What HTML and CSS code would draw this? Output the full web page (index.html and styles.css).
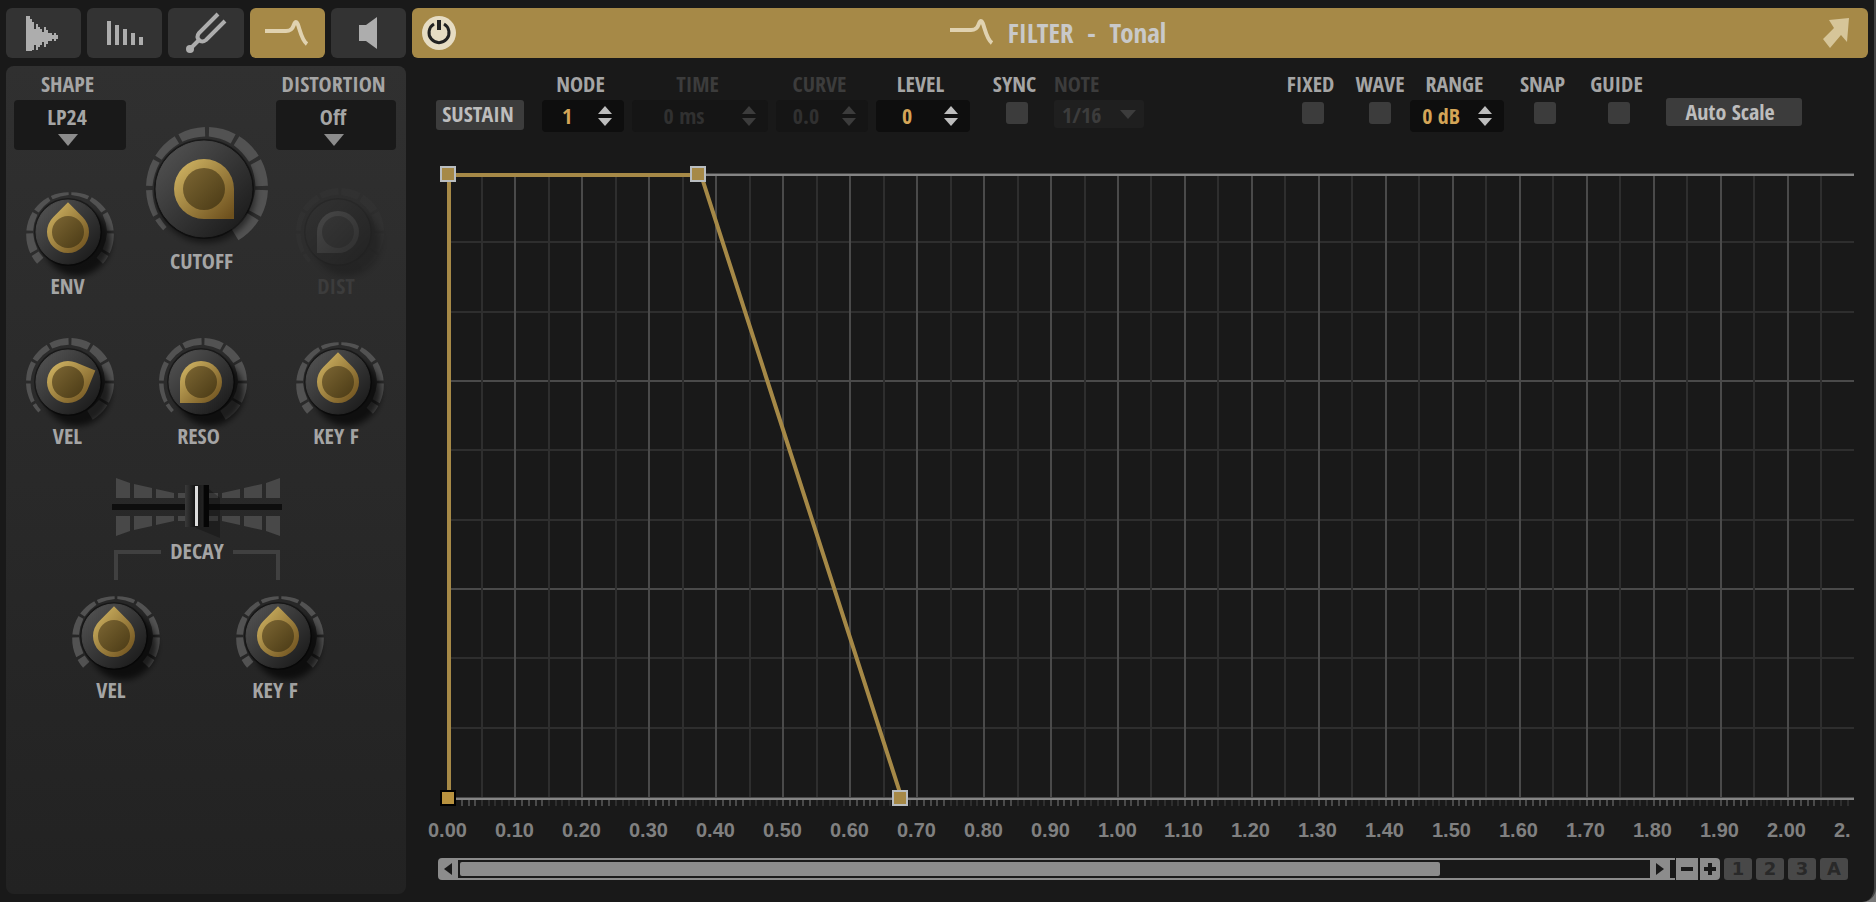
FILE: index.html
```html
<!DOCTYPE html>
<html lang="en">
<head>
    <meta charset="UTF-8">
    <meta name="viewport" content="width=device-width, initial-scale=1.0">
    <title>Filter - Tonal</title>
    <link rel="stylesheet" href="styles.css">
</head>
<body>
    <div class="window">
        <nav class="tabs">
            <button class="tab" aria-label="Sample">
                <svg width="38" height="36" viewBox="0 0 38 36"><path d="M1 1h4v3h2v3h2v7h2v-5h2v3h2v2h2v3h2v-5h2v3h2v3h4v2h2v-2h2v2h2v4h-2v2h-2v-2h-2v2h-4v3h-2v3h-2v-5h-2v3h-2v2h-2v3h-2v-5H9v5H7v3H5v4H1z"/></svg>
            </button>
            <button class="tab" aria-label="Harmonics">
                <svg width="38" height="26" viewBox="0 0 38 26"><path d="M1 1h4v24H1zM9 5h4v20H9zM17 9h4v16h-4zM25 13h4v12h-4zM33 17h4v8h-4z"/></svg>
            </button>
            <button class="tab" aria-label="Tuning">
                <svg width="42" height="42" viewBox="0 0 42 42"><path class="line" d="M33 2 14 21Q11 25 14 28Q17 31 21 28L40 9M14 28 6 36"/><circle cx="5" cy="37" r="4"/></svg>
            </button>
            <button class="tab active" aria-label="Filter">
                <svg width="44" height="28" viewBox="0 0 44 28"><path class="curve" d="M0 12H21C30 12 28 3 31 3C34 3 35 20 42 25"/></svg>
            </button>
            <button class="tab" aria-label="Amplifier">
                <svg width="20" height="34" viewBox="0 0 20 34"><path d="M1 9h7L19 1v32L8 25H1z"/></svg>
            </button>
        </nav>

        <header class="header">
            <button class="power" aria-label="Power">
                <svg width="34" height="34" viewBox="0 0 34 34"><circle class="disc" cx="17" cy="17" r="17"/><path class="ring" d="M12 8A10 10 0 1 0 22 8"/><path class="bar" d="M17 4v10"/></svg>
            </button>
            <div class="title">
                <svg width="44" height="34" viewBox="0 0 44 34"><path class="curve" d="M0 14H21C30 14 28 5 31 5C34 5 35 22 42 27"/></svg>
                <h1>FILTER&nbsp; -&nbsp; Tonal</h1>
            </div>
            <button class="expand" aria-label="Expand">
                <svg width="28" height="32" viewBox="0 0 28 32"><path d="M7 3 27 1 25 25 19 18 8 31 1 22 12 11z"/></svg>
            </button>
        </header>

        <aside class="sidebar">
            <div class="knob-grid">
                <div class="column left">
                    <label class="caption" for="shape">SHAPE</label>
                    <div class="select tall">
                        <select id="shape"><option>LP24</option></select>
                        <svg width="20" height="12" viewBox="0 0 20 12"><path d="M0 0h20L10 12z"/></svg>
                    </div>
                    <div class="knob" data-angle="0" data-ring="bipolar"><input type="range" id="env"></div>
                    <label class="caption" for="env">ENV</label>
                </div>
                <div class="column middle">
                    <div class="knob large" data-angle="135"><input type="range" id="cutoff" value="100"></div>
                    <label class="caption" for="cutoff">CUTOFF</label>
                </div>
                <div class="column right">
                    <label class="caption" for="distortion">DISTORTION</label>
                    <div class="select tall">
                        <select id="distortion"><option>Off</option></select>
                        <svg width="20" height="12" viewBox="0 0 20 12"><path d="M0 0h20L10 12z"/></svg>
                    </div>
                    <div class="knob disabled" data-angle="-135"><input type="range" id="dist" value="0" disabled></div>
                    <label class="caption disabled" for="dist">DIST</label>
                </div>
                <div class="column left">
                    <div class="knob" data-angle="67"><input type="range" id="vel" value="75"></div>
                    <label class="caption" for="vel">VEL</label>
                </div>
                <div class="column">
                    <div class="knob" data-angle="-135"><input type="range" id="reso" value="0"></div>
                    <label class="caption" for="reso">RESO</label>
                </div>
                <div class="column right">
                    <div class="knob" data-angle="0" data-ring="bipolar"><input type="range" id="keyf"></div>
                    <label class="caption" for="keyf">KEY F</label>
                </div>
            </div>

            <div class="decay">
                <div class="fader">
                    <svg width="170" height="66" viewBox="0 0 170 66">
                        <defs>
                            <linearGradient id="cap">
                                <stop offset="0" stop-color="#3a3a3a"/>
                                <stop offset="0.4" stop-color="#151515"/>
                                <stop offset="0.75" stop-color="#222"/>
                                <stop offset="0.8" stop-color="#050505"/>
                            </linearGradient>
                        </defs>
                        <path class="wing" d="M4 6 18 11V26H4zM22 12 40 16V26H22zM44 17 62 21V26H44zM66 21H106V26H66zM110 21 128 17V26H110zM132 16 150 12V26H132zM154 11 168 6V26H154z"/>
                        <path class="wing" d="M4 64 18 59V44H4zM22 58 40 54V44H22zM44 53 62 49V44H44zM66 49H106V44H66zM110 49 128 53V44H110zM132 54 150 58V44H132zM154 59 168 64V44H154z"/>
                        <path class="slot" d="M0 32h170v6H0z"/>
                        <path class="cap-shadow" d="M97 17l11 9v40L84 56z"/>
                        <path d="M73 13h24v42H73z" fill="url(#cap)"/>
                        <path class="cap-line" d="M83 14h3v40h-3z"/>
                    </svg>
                    <input type="range" id="decay">
                </div>
                <div class="bracket">
                    <span class="arm left-arm"></span>
                    <label class="caption" for="decay">DECAY</label>
                    <span class="arm right-arm"></span>
                </div>
                <div class="decay-knobs">
                    <div class="column">
                        <div class="knob" data-angle="0" data-ring="bipolar"><input type="range" id="decayVel"></div>
                        <label class="caption" for="decayVel">VEL</label>
                    </div>
                    <div class="column">
                        <div class="knob" data-angle="0" data-ring="bipolar"><input type="range" id="decayKey"></div>
                        <label class="caption" for="decayKey">KEY F</label>
                    </div>
                </div>
            </div>
        </aside>

        <main class="editor">
            <div class="toolbar">
                <button class="flat sustain">SUSTAIN</button>
                <div class="field node">
                    <label class="caption" for="node">NODE</label>
                    <div class="number"><input type="text" id="node" value="1"><svg width="14" height="20" viewBox="0 0 14 20"><path d="M0 8 7 0l7 8zM0 12h14l-7 8z"/></svg></div>
                </div>
                <div class="field time disabled">
                    <label class="caption" for="time">TIME</label>
                    <div class="number"><input type="text" id="time" value="0 ms" disabled><svg width="14" height="20" viewBox="0 0 14 20"><path d="M0 8 7 0l7 8zM0 12h14l-7 8z"/></svg></div>
                </div>
                <div class="field curve-field disabled">
                    <label class="caption" for="curve">CURVE</label>
                    <div class="number"><input type="text" id="curve" value="0.0" disabled><svg width="14" height="20" viewBox="0 0 14 20"><path d="M0 8 7 0l7 8zM0 12h14l-7 8z"/></svg></div>
                </div>
                <div class="field level">
                    <label class="caption" for="level">LEVEL</label>
                    <div class="number"><input type="text" id="level" value="0"><svg width="14" height="20" viewBox="0 0 14 20"><path d="M0 8 7 0l7 8zM0 12h14l-7 8z"/></svg></div>
                </div>
                <div class="field check sync">
                    <label class="caption" for="sync">SYNC</label>
                    <input type="checkbox" id="sync">
                </div>
                <div class="field note disabled">
                    <label class="caption" for="note">NOTE</label>
                    <div class="select">
                        <select id="note" disabled><option>1/16</option></select>
                        <svg width="16" height="9" viewBox="0 0 16 9"><path d="M0 0h16L8 9z"/></svg>
                    </div>
                </div>
                <div class="field check">
                    <label class="caption" for="fixed">FIXED</label>
                    <input type="checkbox" id="fixed">
                </div>
                <div class="field check wave">
                    <label class="caption" for="wave">WAVE</label>
                    <input type="checkbox" id="wave">
                </div>
                <div class="field range">
                    <label class="caption" for="range">RANGE</label>
                    <div class="number"><input type="text" id="range" value="0 dB"><svg width="14" height="20" viewBox="0 0 14 20"><path d="M0 8 7 0l7 8zM0 12h14l-7 8z"/></svg></div>
                </div>
                <div class="field check">
                    <label class="caption" for="snap">SNAP</label>
                    <input type="checkbox" id="snap">
                </div>
                <div class="field check">
                    <label class="caption" for="guide">GUIDE</label>
                    <input type="checkbox" id="guide">
                </div>
                <button class="flat auto-scale">Auto Scale</button>
            </div>

            <div class="plot"><svg id="envelope" role="img" aria-label="Filter envelope"></svg></div>

            <div class="bottom-bar">
                <div class="scrollbar">
                    <button class="scroll-button" aria-label="Scroll left"><svg width="8" height="12" viewBox="0 0 8 12"><path d="M8 0v12L0 6z"/></svg></button>
                    <div class="track"><div class="thumb"></div></div>
                    <button class="scroll-button" aria-label="Scroll right"><svg width="8" height="12" viewBox="0 0 8 12"><path d="M0 0v12l8-6z"/></svg></button>
                    <span class="stop"></span>
                </div>
                <div class="zoom">
                    <button aria-label="Zoom out"><svg width="12" height="12" viewBox="0 0 12 12"><path d="M0 4h12v4H0z"/></svg></button>
                    <button aria-label="Zoom in"><svg width="12" height="12" viewBox="0 0 12 12"><path d="M0 4h4V0h4v4h4v4H8v4H4V8H0z"/></svg></button>
                </div>
                <div class="slots">
                    <button>1</button>
                    <button>2</button>
                    <button>3</button>
                    <button>A</button>
                </div>
            </div>
        </main>
    </div>
    <script src="script.js"></script>
</body>
</html>
```
FILE: styles.css
```css
* {
    margin: 0;
    padding: 0;
    box-sizing: border-box;
}

body {
    background: #777;
    color: #a5a5a5;
    font-family: "Open Sans Condensed", "Open Sans", sans-serif;
    font-size: 22px;
    font-weight: bold;
    line-height: 24px;
}

button, input, select {
    font: inherit;
    color: inherit;
    border: none;
    background: none;
    appearance: none;
}

svg {
    display: block;
    fill: currentColor;
}

.window {
    display: grid;
    grid-template-columns: 400px minmax(0, 1fr);
    grid-template-rows: 50px minmax(0, 1fr);
    gap: 8px 6px;
    min-height: 100vh;
    padding: 8px 6px 8px 6px;
    background: #191919;
    border-right: 2px solid #454545;
    border-bottom-right-radius: 14px;
}

/* Page tabs */
.tabs {
    display: flex;
    gap: 6px;
}

.tab {
    flex: 1;
    display: flex;
    align-items: center;
    justify-content: center;
    background: #333;
    border-radius: 6px;
    color: #adadad;
}

.tab.active {
    background: #a68947;
}

.tab .line {
    fill: none;
    stroke: currentColor;
    stroke-width: 4;
}

.curve {
    fill: none;
    stroke: #e0d2b0;
    stroke-width: 4;
}

/* Title bar */
.header {
    display: flex;
    align-items: center;
    padding: 0 18px 0 10px;
    background: #a68947;
    border-radius: 6px;
}

.title {
    flex: 1;
    display: flex;
    align-items: center;
    justify-content: center;
    gap: 14px;
    padding-right: 162px;
}

.title h1 {
    color: #c9c9c9;
    font-size: 27px;
    line-height: 32px;
}

.power .disc {
    fill: #e6dcc3;
}

.power .ring, .power .bar {
    fill: none;
    stroke: #222;
    stroke-width: 3;
}

.power .bar {
    stroke-width: 4;
}

.expand {
    color: #d6c599;
}

/* Sidebar */
.sidebar {
    padding: 5px 10px 8px 8px;
    background: linear-gradient(#303030, #222);
    border-radius: 8px;
}

.knob-grid {
    display: grid;
    grid-template-columns: 112px 1fr 120px;
    row-gap: 44px;
}

.column {
    display: flex;
    flex-direction: column;
    align-items: center;
}

.column.middle {
    padding: 59px 0 0 6px;
}

.column.left .knob {
    margin-right: 4px;
}

.column.right .knob {
    margin-left: 4px;
}

.caption {
    padding-right: 5px;
    white-space: nowrap;
}

.right .knob + .caption {
    padding: 0;
}

.knob {
    position: relative;
    width: 100px;
    height: 82px;
}

.tall + .knob {
    margin-top: 41px;
}

.knob.large {
    width: 140px;
    height: 118px;
}

.knob svg {
    overflow: visible;
}

.knob input, .fader input {
    position: absolute;
    inset: 0;
    width: 100%;
    height: 100%;
    opacity: 0;
    cursor: pointer;
}

.knob.disabled {
    filter: grayscale(1) brightness(0.7);
    opacity: 0.3;
}

.caption.disabled, .field.disabled {
    color: #3c3c3c;
}

.select {
    position: relative;
    width: 100%;
}

.select select {
    width: 100%;
    height: 28px;
    padding-left: 8px;
    background: #1f1f1f;
    border-radius: 3px;
    opacity: 1;
}

.select svg {
    position: absolute;
    right: 8px;
    top: 10px;
    pointer-events: none;
}

.select.tall select {
    height: 50px;
    padding: 0 6px 18px 0;
    background: #191919;
    border-radius: 4px;
    text-align-last: center;
}

.select.tall svg {
    left: calc(50% - 12px);
    top: 34px;
    color: #8c8c8c;
}

.column .caption + .select {
    margin-top: 5px;
}

/* Decay */
.decay {
    display: flex;
    flex-direction: column;
    align-items: center;
    width: 366px;
    padding-top: 25px;
}

.fader {
    position: relative;
}

.wing {
    fill: #484848;
}

.slot {
    fill: #0e0e0e;
}

.cap-shadow {
    fill: rgba(0, 0, 0, 0.25);
}

.cap-line {
    fill: #ddd;
}

.bracket {
    display: flex;
    align-items: flex-start;
    width: 166px;
    height: 42px;
}

.bracket .caption {
    padding: 0;
}

.arm {
    flex: 1;
    height: 30px;
    margin-top: 12px;
    border-top: 4px solid #404040;
}

.left-arm {
    margin-right: 9px;
    border-left: 4px solid #404040;
}

.right-arm {
    margin-left: 9px;
    border-right: 4px solid #404040;
}

.decay-knobs {
    display: flex;
    gap: 64px;
    padding: 15px 3px 0 0;
}

/* Envelope editor */
.editor {
    display: flex;
    flex-direction: column;
    min-width: 0;
}

.toolbar {
    display: flex;
    gap: 8px;
    padding: 5px 66px 0 24px;
}

.flat {
    height: 30px;
    padding-bottom: 4px;
    background: #3c3c3c;
    border-radius: 3px;
    color: #bdbdbd;
}

.sustain {
    width: 88px;
    margin: 29px 10px 0 0;
    padding-right: 4px;
}

.auto-scale {
    width: 136px;
    height: 28px;
    margin: 27px 0 0 6px;
    padding: 0 8px 2px 0;
}

.field {
    display: flex;
    flex-direction: column;
    align-items: center;
    gap: 5px;
}

.number {
    display: flex;
    align-items: center;
    width: 100%;
    height: 32px;
    padding-right: 12px;
    background: #0e0e0e;
    border-radius: 4px;
    color: #bdbdbd;
}

.number input {
    flex: 1;
    min-width: 0;
    padding: 0 6px 2px 0;
    color: #d4a557;
    text-align: center;
}

.disabled .number {
    background: #151515;
    color: #3c3c3c;
}

.disabled .number input {
    color: #303030;
}

.node {
    width: 82px;
}

.time {
    width: 136px;
}

.curve-field {
    width: 92px;
}

.level, .range {
    width: 94px;
}

.check {
    width: 66px;
}

.check input {
    width: 22px;
    height: 22px;
    margin-top: 2px;
    background: #3c3c3c;
    border-radius: 3px;
}

.sync {
    width: 68px;
    padding-left: 10px;
}

.note {
    width: 90px;
    align-items: flex-start;
    margin-right: auto;
}

.wave {
    width: 48px;
    padding-left: 4px;
}

.wave .caption {
    padding: 0;
}

.plot {
    flex: 1;
    min-height: 300px;
    margin: 18px 14px 8px 16px;
}

.plot svg {
    width: 100%;
    height: 100%;
}

.plot rect {
    shape-rendering: crispEdges;
}

.axis-label {
    fill: #808080;
    font-family: "Liberation Sans", Arial, sans-serif;
    font-size: 20px;
}

.envelope-line {
    fill: none;
    stroke: #a68947;
    stroke-width: 4;
}

/* Bottom bar */
.bottom-bar {
    display: flex;
    height: 22px;
    margin: 0 20px 14px 26px;
    color: #191919;
}

.scrollbar {
    flex: 1;
    display: flex;
    margin-right: 1px;
    background: #8c8c8c;
    border-radius: 4px 0 0 4px;
}

.scroll-button, .zoom button {
    display: flex;
    align-items: center;
    justify-content: center;
    width: 20px;
}

.stop {
    width: 5px;
    margin: 2px 0;
    background: #191919;
}

.track {
    flex: 1;
    margin: 2px 0;
    padding: 2px;
    background: #191919;
}

.thumb {
    width: calc(83% - 6px);
    height: 14px;
    background: #8c8c8c;
    border-radius: 2px;
}

.zoom {
    display: flex;
    margin-right: 4px;
    background: #8c8c8c;
    border-radius: 0 4px 4px 0;
}

.zoom button {
    width: 22px;
}

.zoom button + button {
    border-left: 2px solid #191919;
}

.slots {
    display: flex;
    gap: 4px;
}

.slots button {
    width: 28px;
    background: #484848;
    border-radius: 3px;
    color: #292929;
    font-family: "DejaVu Sans", sans-serif;
    font-size: 18px;
    line-height: 22px;
}
```
FILE: script.js
```js
// Knobs
function point(r, deg) {
    const a = deg * Math.PI / 180;
    return (r * Math.sin(a)).toFixed(2) + " " + (-r * Math.cos(a)).toFixed(2);
}

function ringPath(size, bipolar) {
    let d = "";
    const stops = [-134, -120, -90, -60, -30, 0, 30, 60, 90, 120, bipolar ? 134 : 149];
    const inner = deg => bipolar ? size * 0.84 : size * (0.92 - 0.16 * (deg + 134) / 283);
    const outer = deg => bipolar ? size * (0.9 + 0.14 * Math.abs(deg) / 134) : size;

    for (let i = 0; i < 10; i++) {
        const a = stops[i] + (i > 0 ? 2 : 0);
        const b = stops[i + 1] - (i < 9 ? 2 : 0);
        d += `M${point(outer(a), a)}A${size} ${size} 0 0 1 ${point(outer(b), b)}`;
        d += `L${point(inner(b), b)}A${size} ${size} 0 0 0 ${point(inner(a), a)}Z`;
    }
    return d;
}

document.querySelectorAll(".knob").forEach((knob, i) => {
    const large = knob.classList.contains("large");
    const angle = Number(knob.dataset.angle);
    const w = large ? 140 : 100;
    const h = large ? 118 : 82;
    const body = large ? 48 : 32;
    const ring = large ? 61 : 44;
    const mark = large ? 30 : 21;
    const tip = mark * Math.SQRT2;

    knob.insertAdjacentHTML("afterbegin", `
        <svg width="${w}" height="${h}" viewBox="${-w / 2} ${-h / 2} ${w} ${h}">
            <defs>
                <linearGradient id="body${i}" x1="0" y1="0" x2="1" y2="1">
                    <stop offset="0.1" stop-color="#505050"/><stop offset="0.9" stop-color="#1c1c1c"/>
                </linearGradient>
                <linearGradient id="gold${i}" x1="0" y1="0" x2="1" y2="1">
                    <stop offset="0.1" stop-color="#ccb060"/><stop offset="0.95" stop-color="#6e511e"/>
                </linearGradient>
                <linearGradient id="dot${i}" x1="0" y1="0" x2="1" y2="1">
                    <stop offset="0" stop-color="#7c6633"/><stop offset="1" stop-color="#4a3a15"/>
                </linearGradient>
                <filter id="soft${i}" x="-30%" y="-30%" width="160%" height="160%"><feGaussianBlur stdDeviation="3"/></filter>
            </defs>
            <path d="${ringPath(ring, knob.dataset.ring === "bipolar")}" transform="translate(${large ? "3 -1" : "2 0"})" fill="#525252"/>
            <circle cx="${large ? 2 : 9}" cy="${large ? 4 : 10}" r="${body + 2}" fill="#000" fill-opacity="${large ? 0.5 : 0.65}" filter="url(#soft${i})"/>
            <circle r="${body + 2}" fill="#000" fill-opacity="0.4"/>
            <circle r="${body}" fill="url(#body${i})" stroke="url(#body${i})"/>
            <path d="M${point(mark, angle - 45)}L${point(tip, angle)}L${point(mark, angle + 45)}A${mark} ${mark} 0 1 1 ${point(mark, angle - 45)}Z" fill="url(#gold${i})"/>
            <circle r="${large ? 21 : 16}" fill="url(#dot${i})"/>
        </svg>`);
});

// Envelope plot
const svg = document.getElementById("envelope");

function drawEnvelope() {
    const width = svg.clientWidth;
    const height = svg.clientHeight;
    const left = 21;
    const top = 25;
    const bottom = height - 51;
    const step = 66.95;
    const row = (bottom - top) / 9;
    let html = "";
    const rect = (x, y, w, h, fill) => {
        html += `<rect x="${Math.floor(x)}" y="${Math.round(y)}" width="${w}" height="${h}" fill="${fill}"/>`;
    };

    for (let i = 1; i < 9; i++) {
        rect(left, top + i * row - 3, width - left, 2, i % 3 ? "#2e2e2e" : "#4a4a4a");
    }
    for (let i = 1; left + i * step / 2 < width; i++) {
        rect(left + i * step / 2 - 1, top, 2, bottom - top, i % 2 ? "#2e2e2e" : "#4a4a4a");
    }
    for (let i = 1; left + i * step / 10 < width; i++) {
        rect(left + i * step / 10 - 1, bottom, 2, 7, i % 10 < 5 ? "#4a4a4a" : "#2e2e2e");
    }
    [top, bottom].forEach(y => {
        rect(left, y - 2, width - left, 1, "#4a4a4a");
        rect(left, y - 1, width - left, 2, "#858585");
    });

    // A label that runs past the right edge keeps only its whole digits
    for (let i = 0; i * step + 17 < width; i++) {
        const x = Math.round(i * step);
        const label = (i / 10).toFixed(2);
        html += `<text class="axis-label" x="${x}" y="${height - 13}">${x + 40 > width ? label.slice(0, 2) : label}</text>`;
    }

    html += `<path class="envelope-line" d="M${left} ${bottom}V${top}H${left + 252}L${left + 453} ${bottom}"/>`;
    [[0, bottom, true], [0, top], [250, top], [452, bottom]].forEach(([x, y, selected]) => {
        rect(left + x - 9, y - 9, 16, 16, selected ? "#000" : "#b9bdc0");
        rect(left + x - 7, y - 7, 12, 12, selected ? "#b8923f" : "#a68947");
    });
    svg.innerHTML = html;
}

drawEnvelope();
window.addEventListener("resize", drawEnvelope);
```
